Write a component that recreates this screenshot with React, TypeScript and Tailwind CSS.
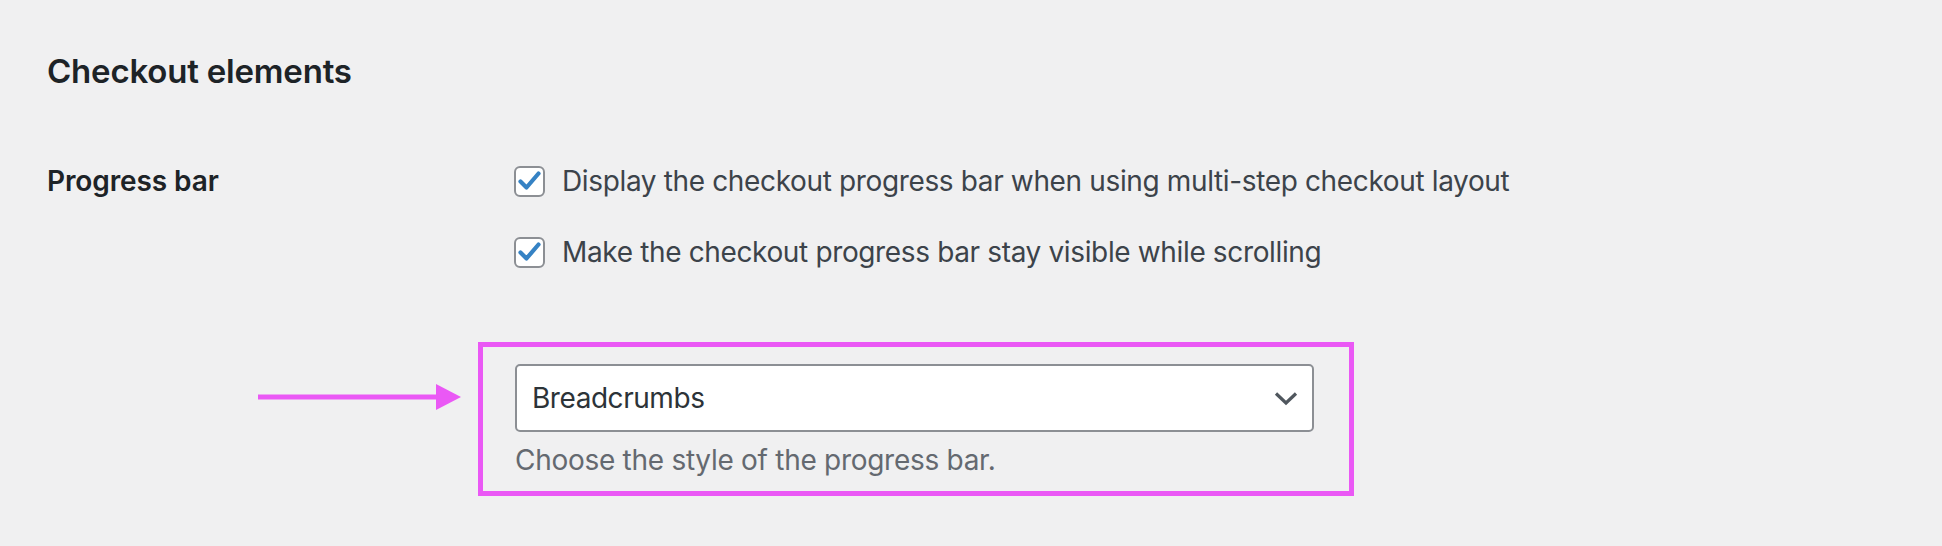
const font = { fontFamily: 'Inter, "Noto Sans", sans-serif' };

const CheckRow = ({ label }: { label: string }) => (
  <label className="flex items-center gap-[17px] h-[36px] text-[28px] leading-[36px] tracking-[-0.36px] text-[#3c434a]">
    <span className="w-[31px] h-[31px] shrink-0 rounded-[6px] border-2 border-[#8c8f94] bg-white flex items-center justify-center">
      <svg width="23" height="20" viewBox="0 0 23 20">
        <path d="M2.5 10.5 L8.5 16.5 L20.5 2.5" fill="none" stroke="#3582c4" strokeWidth="4.2" strokeLinecap="round" strokeLinejoin="round" />
      </svg>
    </span>
    {label}
  </label>
);

const Arrow = () => (
  <svg width="203" height="26" viewBox="0 0 203 26" className="shrink-0 mt-[42px]">
    <rect x="0" y="10.5" width="180" height="5" fill="#ea58f5" />
    <polygon points="178,0 203,13 178,26" fill="#ea58f5" />
  </svg>
);

export default function App() {
  return (
    <div className="w-[1942px] h-[546px] bg-[#f0f0f1] pl-[47px] pt-[51px]" style={font}>
      <h2 className="text-[33px] leading-[40px] font-semibold text-[#1d2327] tracking-[-0.2px]">
        Checkout elements
      </h2>

      <div className="mt-[72px] grid grid-cols-[467px_auto]">
        <div className="text-[28px] leading-[36px] font-semibold text-[#1d2327] tracking-[-0.1px]">Progress bar</div>
        <div className="flex flex-col gap-[35px]">
          <CheckRow label="Display the checkout progress bar when using multi-step checkout layout" />
          <CheckRow label="Make the checkout progress bar stay visible while scrolling" />
        </div>
      </div>

      <div className="mt-[72px] flex items-start pl-[211px] gap-[17px]">
        <Arrow />
        <div className="border-[5px] border-[#ea58f5] pl-[32px] pr-[35px] pt-[17px] pb-[13px]">
          <div className="w-[799px] h-[68px] bg-white border-2 border-[#8c8f94] rounded-[5px] flex items-center justify-between pl-[15px] pr-[14px]">
            <span className="text-[28px] tracking-[-0.45px] text-[#2c3338]">Breadcrumbs</span>
            <svg width="24" height="15" viewBox="0 0 24 15">
              <path d="M2 2.5 L12 12 L22 2.5" fill="none" stroke="#50575e" strokeWidth="3.2" />
            </svg>
          </div>
          <p className="mt-[10px] text-[28px] leading-[36px] tracking-[-0.28px] text-[#646970]">
            Choose the style of the progress bar.
          </p>
        </div>
      </div>
    </div>
  );
}
